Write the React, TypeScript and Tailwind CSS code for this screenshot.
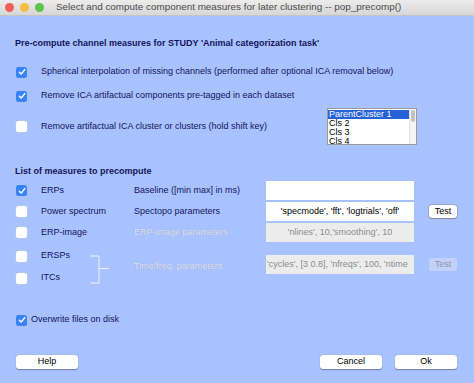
import React from 'react';

const navy = 'text-[#14145c]';

const Check = ({ on }: { on?: boolean }) =>
  on ? (
    <div className="w-[11px] h-[11px] rounded-[2.5px] bg-[#3a83f6] flex items-center justify-center shrink-0">
      <svg width="8" height="8" viewBox="0 0 8 8">
        <path d="M1.3 4.2 L3.2 6 L6.8 1.6" fill="none" stroke="white" strokeWidth="1.4" strokeLinecap="round" strokeLinejoin="round" />
      </svg>
    </div>
  ) : (
    <div className="w-[11px] h-[11px] rounded-[2.5px] bg-white shadow-[0_0_0_0.5px_#c5cde0] shrink-0" />
  );

const Btn = ({ label, w = 'w-[62px]' }: { label: string; w?: string }) => (
  <div
    className={`${w} h-[14px] rounded-[3px] bg-white shadow-[0_0.5px_1px_rgba(0,0,0,0.35)] flex items-center justify-center text-[9px] text-black`}
  >
    {label}
  </div>
);

const Field = ({ value, disabled, left }: { value?: string; disabled?: boolean; left?: boolean }) => (
  <div
    className={`w-[148px] h-[19px] shrink-0 flex items-center overflow-hidden whitespace-nowrap text-[9px] ${
      left ? 'justify-start pl-[1px]' : 'justify-center'
    } ${disabled ? 'bg-[#ececec] text-[#8c8c8c]' : 'bg-white text-black'}`}
  >
    {value}
  </div>
);

const Test = ({ disabled }: { disabled?: boolean }) => (
  <div
    className={`ml-[15px] w-[28px] h-[13px] rounded-[3px] flex items-center justify-center text-[9px] ${
      disabled
        ? 'bg-[#c3d1f7] text-[#8c97b5]'
        : 'bg-white text-black shadow-[0_0_0_0.5px_#8a8a8a,0_0.5px_1px_rgba(0,0,0,0.3)]'
    }`}
  >
    Test
  </div>
);

const dim = 'text-[#dde2ee] [text-shadow:0_0_1px_#95a2c6]';

export default function App() {
  return (
    <div
      className="w-[474px] h-[383px] flex flex-col overflow-hidden"
      style={{ fontFamily: '"Liberation Sans", Arial, sans-serif' }}
    >
      {/* title bar */}
      <div className="h-[16px] shrink-0 bg-gradient-to-b from-[#ececec] to-[#d6d6d6] flex items-center border-b border-[#c4c4c4]">
        <div className="flex items-center gap-[6px] pl-[5px]">
          <div className="w-[9px] h-[9px] rounded-full bg-[#ef5f58]" />
          <div className="w-[9px] h-[9px] rounded-full bg-[#f6bd3f]" />
          <div className="w-[9px] h-[9px] rounded-full bg-[#5cc54c]" />
        </div>
        <div className="ml-[12px] text-[9.9px] text-[#4c4c4c] whitespace-nowrap">
          Select and compute component measures for later clustering -- pop_precomp()
        </div>
      </div>

      {/* body */}
      <div className={`flex-1 bg-[#a8c1ff] flex flex-col pl-[16px] ${navy} text-[9px]`}>
        <div className="mt-[21px] h-[14px] flex items-center font-bold -ml-[1px]">
          Pre-compute channel measures for STUDY 'Animal categorization task'
        </div>

        <div className="mt-[15px] h-[12px] flex items-center">
          <Check on />
          <span className="ml-[14px]">
            Spherical interpolation of missing channels (performed after optional ICA removal below)
          </span>
        </div>
        <div className="mt-[12px] h-[12px] flex items-center">
          <Check on />
          <span className="ml-[14px]">Remove ICA artifactual components pre-tagged in each dataset</span>
        </div>
        <div className="mt-[6px] h-[37px] w-[401px] flex items-center">
          <Check />
          <span className="ml-[14px]">Remove artifactual ICA cluster or clusters (hold shift key)</span>
          <div className="ml-auto w-[90px] h-[37px] bg-white border border-[#9a9a9a] flex overflow-hidden text-[9px] text-black">
            <div className="flex-1 flex flex-col pt-[1px]">
              <div className="bg-[#2562d6] text-white pl-[1px] h-[9px] leading-[9px] shrink-0">ParentCluster 1</div>
              <div className="pl-[1px] h-[9px] leading-[9px] shrink-0">Cls 2</div>
              <div className="pl-[1px] h-[9px] leading-[9px] shrink-0">Cls 3</div>
              <div className="pl-[1px] h-[9px] leading-[9px] shrink-0">Cls 4</div>
            </div>
            <div className="w-[7px] bg-[#f4f4f4] border-l border-[#e2e2e2] flex justify-center pt-[1px]">
              <div className="w-[4px] h-[12px] rounded-full bg-[#c2c2c2]" />
            </div>
          </div>
        </div>

        <div className="mt-[20px] h-[14px] flex items-center font-bold -ml-[1px]">List of measures to precompute</div>

        <div className="mt-[2px] h-[19px] flex items-center">
          <Check on />
          <span className="ml-[14px] w-[93px]">ERPs</span>
          <span className="w-[132px]">Baseline ([min max] in ms)</span>
          <Field />
        </div>
        <div className="mt-[2px] h-[19px] flex items-center">
          <Check />
          <span className="ml-[14px] w-[93px]">Power spectrum</span>
          <span className="w-[132px]">Spectopo parameters</span>
          <Field value="'specmode', 'fft', 'logtrials', 'off'" />
          <Test />
        </div>
        <div className="mt-[2px] h-[19px] flex items-center">
          <Check />
          <span className="ml-[14px] w-[93px]">ERP-image</span>
          <span className={`w-[132px] ${dim}`}>ERP-image parameters</span>
          <Field disabled value="'nlines', 10,'smoothing', 10" />
        </div>

        <div className="mt-[8px] h-[34px] flex items-center">
          <div className="w-[74px] shrink-0 flex flex-col justify-between h-[34px]">
            <div className="flex items-center h-[12px]">
              <Check />
              <span className="ml-[14px]">ERSPs</span>
            </div>
            <div className="flex items-center h-[12px]">
              <Check />
              <span className="ml-[14px]">ITCs</span>
            </div>
          </div>
          <svg width="20" height="34" viewBox="0 0 20 34" className="shrink-0">
            <path d="M0.5 6 H9 V33 H0.5 M9 18.5 H19" fill="none" stroke="#eef2ff" strokeWidth="1" />
          </svg>
          <span className={`ml-[24px] w-[132px] shrink-0 ${dim}`}>Time/freq. parameters</span>
          <div className="self-start mt-[5px] flex items-center">
            <Field disabled left value="'cycles', [3 0.8], 'nfreqs', 100, 'ntime" />
            <Test disabled />
          </div>
        </div>

        <div className="mt-[30px] h-[12px] flex items-center">
          <Check on />
          <span className="ml-[4px]">Overwrite files on disk</span>
        </div>

        <div className="mt-[29px] w-[441px] flex items-center">
          <Btn label="Help" />
          <div className="ml-auto flex gap-[13px]">
            <Btn label="Cancel" />
            <Btn label="Ok" />
          </div>
        </div>
      </div>
    </div>
  );
}
